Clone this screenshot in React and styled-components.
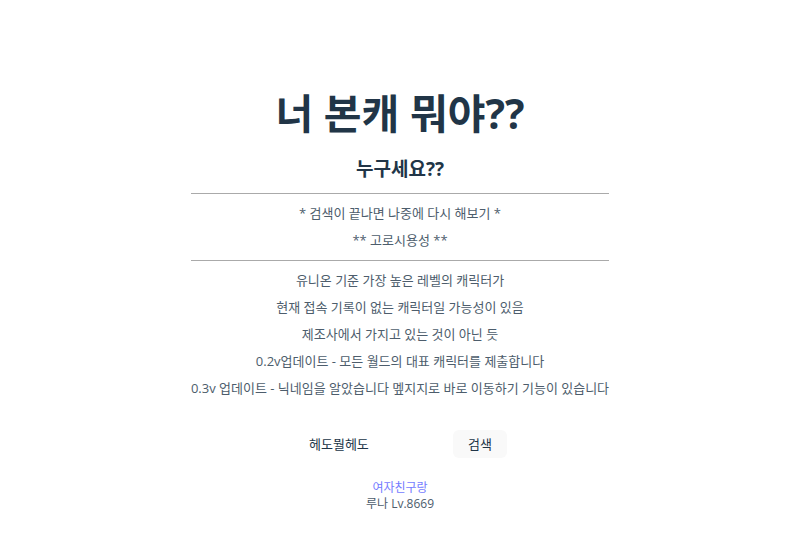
import React, { useState } from 'react';
import styled, { createGlobalStyle } from 'styled-components';

const notices = ['* 검색이 끝나면 나중에 다시 해보기 *', '** 고로시용성 **'];

const updates = [
    '유니온 기준 가장 높은 레벨의 캐릭터가',
    '현재 접속 기록이 없는 캐릭터일 가능성이 있음',
    '제조사에서 가지고 있는 것이 아닌 듯',
    '0.2v업데이트 - 모든 월드의 대표 캐릭터를 제출합니다',
    '0.3v 업데이트 - 닉네임을 알았습니다 멮지지로 바로 이동하기 기능이 있습니다',
];

const App = () => {
    const [name, setName] = useState('헤도뭘헤도');

    return (
        <>
            <GlobalStyle />
            <Page>
                <Title>너 본캐 뭐야??</Title>
                <SubTitle>누구세요??</SubTitle>
                <Content>
                    <Divider />
                    {notices.map((text) => <Line key={text}>{text}</Line>)}
                    <Divider />
                    {updates.map((text) => <Line key={text}>{text}</Line>)}
                </Content>
                <SearchForm onSubmit={(e) => e.preventDefault()}>
                    <NameInput
                        aria-label="닉네임"
                        value={name}
                        onChange={(e) => setName(e.target.value)}
                    />
                    <SearchButton type="submit">검색</SearchButton>
                </SearchForm>
                <Result>
                    <CharacterLink href="#">여자친구랑</CharacterLink>
                    <span>루나 Lv.8669</span>
                </Result>
            </Page>
        </>
    );
};

export default App;

const GlobalStyle = createGlobalStyle`
  body {
    margin: 0;
    background-color: #fff;
    color: #213547;
    font-family: 'Open Sans', 'Noto Sans CJK KR', sans-serif;
    font-size: 13px;
    line-height: 16px;
  }
`;

const Page = styled.main`
  display: flex;
  flex-direction: column;
  align-items: center;
  padding: 89px 16px 40px;
  text-align: center;
`;

const Title = styled.h1`
  margin: 0;
  font-size: 41px;
  line-height: 48px;
  font-weight: 700;
`;

const SubTitle = styled.h2`
  margin: 20px 0 12px;
  font-size: 19px;
  line-height: 24px;
  font-weight: 700;
`;

const Content = styled.section`
  display: flex;
  flex-direction: column;
  color: #4d5d6c;
`;

const Divider = styled.hr`
  width: 100%;
  margin: 0;
  border: 0;
  border-top: 1px solid #aaa;
`;

const Line = styled.p`
  margin: 0;
  padding: 12px 0 0;
  line-height: 15px;

  & + ${Divider} {
    margin-top: 12px;
  }
`;

const SearchForm = styled.form`
  display: flex;
  margin-top: 34px;
`;

const NameInput = styled.input`
  width: 144px;
  padding: 0 0 0 16px;
  border: 0;
  outline: 0;
  background: transparent;
  color: inherit;
  font: inherit;
`;

const SearchButton = styled.button`
  padding: 6px 15px;
  border: 0;
  border-radius: 6px;
  background-color: #f9f9f9;
  color: inherit;
  font: inherit;
`;

const Result = styled.div`
  display: flex;
  flex-direction: column;
  margin-top: 22px;
  color: #4d5d6c;
  font-size: 12px;
`;

const CharacterLink = styled.a`
  color: #747bff;
  text-decoration: none;
`;
